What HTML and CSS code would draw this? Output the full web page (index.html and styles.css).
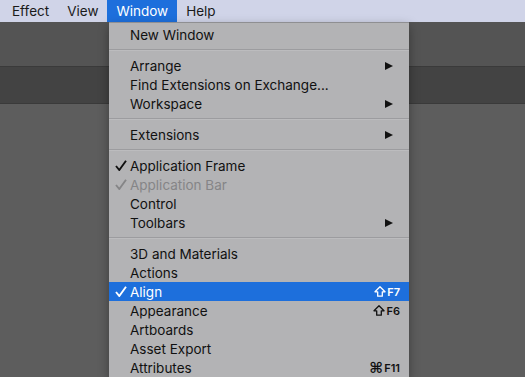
FILE: index.html
```html
<!DOCTYPE html>
<html lang="en">
<head>
    <meta charset="UTF-8">
    <title>Window Menu</title>
    <link rel="stylesheet" href="styles.css">
</head>
<body>
    <!-- Top menu bar -->
    <div class="menubar">
        <span class="menubar-item">Effect</span>
        <span class="menubar-item">View</span>
        <span class="menubar-item active">Window</span>
        <span class="menubar-item">Help</span>
    </div>

    <!-- App workspace behind the menu -->
    <div class="workspace">
        <div class="band band-top"></div>
        <div class="band band-mid"></div>
        <div class="band band-low"></div>
    </div>

    <!-- Window dropdown -->
    <div class="dropdown">
        <div class="row"><span class="check"></span><span class="label">New Window</span></div>
        <div class="sep"></div>
        <div class="row"><span class="check"></span><span class="label">Arrange</span><span class="arrow"></span></div>
        <div class="row"><span class="check"></span><span class="label">Find Extensions on Exchange...</span></div>
        <div class="row"><span class="check"></span><span class="label">Workspace</span><span class="arrow"></span></div>
        <div class="sep"></div>
        <div class="row"><span class="check"></span><span class="label">Extensions</span><span class="arrow"></span></div>
        <div class="sep"></div>
        <div class="row">
            <span class="check"><svg width="12" height="11" viewBox="0 0 12 11"><path d="M1 6 L4.3 10 L11 0.8" fill="none" stroke="currentColor" stroke-width="1.9"/></svg></span>
            <span class="label">Application Frame</span>
        </div>
        <div class="row disabled">
            <span class="check"><svg width="12" height="11" viewBox="0 0 12 11"><path d="M1 6 L4.3 10 L11 0.8" fill="none" stroke="currentColor" stroke-width="1.9"/></svg></span>
            <span class="label">Application Bar</span>
        </div>
        <div class="row"><span class="check"></span><span class="label">Control</span></div>
        <div class="row"><span class="check"></span><span class="label">Toolbars</span><span class="arrow"></span></div>
        <div class="sep"></div>
        <div class="row"><span class="check"></span><span class="label">3D and Materials</span></div>
        <div class="row"><span class="check"></span><span class="label">Actions</span></div>
        <div class="row selected">
            <span class="check"><svg width="12" height="11" viewBox="0 0 12 11"><path d="M1 6 L4.3 10 L11 0.8" fill="none" stroke="currentColor" stroke-width="1.9"/></svg></span>
            <span class="label">Align</span>
            <span class="key"><svg class="shift" width="12" height="11" viewBox="0 0 12 11"><path d="M6 0.8 L11 5.8 L8.3 5.8 L8.3 10.2 L3.7 10.2 L3.7 5.8 L1 5.8 Z" fill="none" stroke="currentColor" stroke-width="1.3" stroke-linejoin="round"/></svg>F7</span>
        </div>
        <div class="row">
            <span class="check"></span>
            <span class="label">Appearance</span>
            <span class="key"><svg class="shift" width="12" height="11" viewBox="0 0 12 11"><path d="M6 0.8 L11 5.8 L8.3 5.8 L8.3 10.2 L3.7 10.2 L3.7 5.8 L1 5.8 Z" fill="none" stroke="currentColor" stroke-width="1.3" stroke-linejoin="round"/></svg>F6</span>
        </div>
        <div class="row"><span class="check"></span><span class="label">Artboards</span></div>
        <div class="row"><span class="check"></span><span class="label">Asset Export</span></div>
        <div class="row"><span class="check"></span><span class="label">Attributes</span><span class="key"><span class="sym">⌘</span>F11</span></div>
    </div>
</body>
</html>
```

FILE: styles.css
```css
body {
    margin: 0;
    width: 525px;
    height: 377px;
    overflow: hidden;
    font-family: Inter, "Noto Sans", sans-serif;
    font-size: 13.5px;
    background-color: #5d5d5d;
}

.menubar {
    display: flex;
    height: 22px;
    align-items: center;
    padding-left: 3px;
    background-color: #d0d4e8;
    color: #1a1a1a;
}
.menubar-item {
    height: 22px;
    line-height: 22px;
    padding: 0 9px;
}
.menubar-item.active {
    background-color: #1d6fdc;
    color: #fff;
}

.workspace {
    display: flex;
    flex-direction: column;
}
.band-top {
    height: 44px;
    background-color: #545454;
}
.band-mid {
    height: 36px;
    background-color: #434343;
    border-top: 1px solid #3a3a3a;
    border-bottom: 1px solid #3a3a3a;
}
.band-low {
    height: 280px;
    background-color: #5d5d5d;
}

.dropdown {
    position: absolute;
    left: 109px;
    top: 22px;
    width: 300px;
    padding-top: 2px;
    background-color: #b3b3b5;
    border-top: 1px solid #8f8f92;
    box-shadow: 0 4px 10px rgba(0, 0, 0, 0.35);
    color: #111;
}
.row {
    display: flex;
    align-items: center;
    height: 19px;
    padding-right: 9px;
}
.check {
    display: flex;
    align-items: center;
    width: 21px;
    box-sizing: border-box;
    padding-left: 6px;
}
.label {
    flex: 1;
}
.arrow {
    width: 0;
    height: 0;
    margin-right: 7px;
    border-top: 4.5px solid transparent;
    border-bottom: 4.5px solid transparent;
    border-left: 8px solid #111;
}
.key {
    display: flex;
    align-items: center;
    font-size: 11px;
    font-weight: 600;
}
.key .shift {
    margin-right: 1px;
}
.key .sym {
    font-family: "DejaVu Sans", sans-serif;
    font-size: 15px;
    font-weight: bold;
    margin-right: 1px;
}
.disabled {
    color: #858587;
}
.selected {
    background-color: #1d6fdc;
    color: #fff;
}
.sep {
    height: 12px;
    display: flex;
    align-items: center;
}
.sep::before {
    content: "";
    flex: 1;
    height: 1px;
    background-color: #9c9c9f;
    border-bottom: 1px solid #bcbcbe;
}
```
